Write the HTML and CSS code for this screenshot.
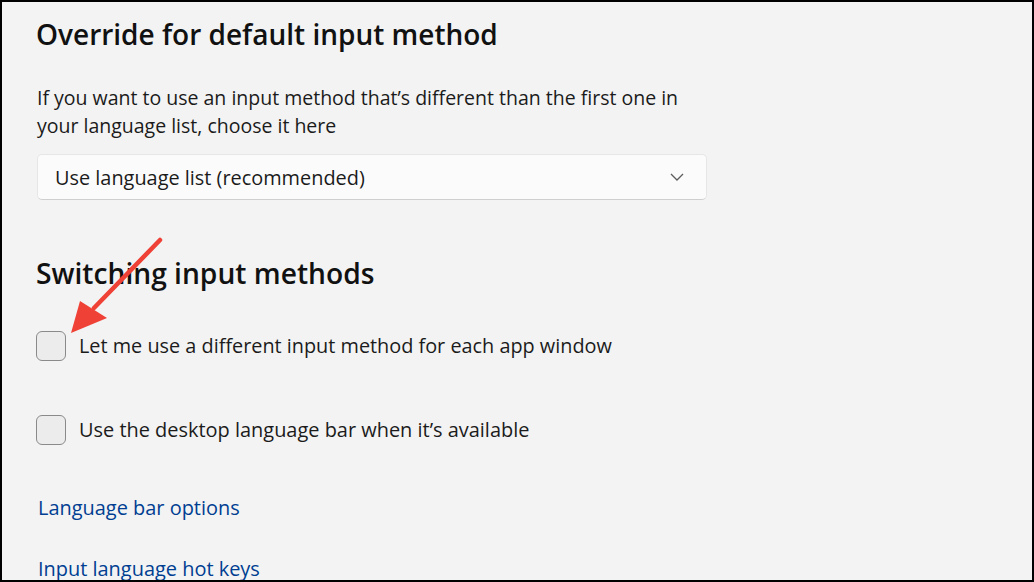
FILE: index.html
```html
<!DOCTYPE html>
<html lang="en">
<head>
<meta charset="utf-8">
<title>Input method settings</title>
<link rel="stylesheet" href="styles.css">
</head>
<body>
<div class="frame">
  <main class="content">
    <h2 class="title">Override for default input method</h2>
    <p class="desc">If you want to use an input method that’s different than the first one in your language list, choose it here</p>
    <div class="select">
      <span class="select-text">Use language list (recommended)</span>
      <svg class="chev" width="14" height="8" viewBox="0 0 14 8"><path d="M1 1 L7 7 L13 1" fill="none" stroke="#5c5c5c" stroke-width="1.3"/></svg>
    </div>
    <h2 class="title title-2">Switching input methods</h2>
    <label class="check-row"><span class="box"></span><span class="check-text">Let me use a different input method for each app window</span></label>
    <label class="check-row"><span class="box"></span><span class="check-text">Use the desktop language bar when it’s available</span></label>
    <a class="link" href="#">Language bar options</a>
    <a class="link" href="#">Input language hot keys</a>
  </main>
  <svg class="arrow" width="200" height="120" viewBox="0 0 200 120">
    <line x1="158" y1="4" x2="92" y2="72" stroke="#ef4136" stroke-width="4.5" stroke-linecap="round"/>
    <polygon points="69,97 78,65 105,82" fill="#ef4136"/>
  </svg>
</div>
</body>
</html>
```
FILE: styles.css
```css
* { box-sizing: border-box; }
html, body { margin: 0; padding: 0; }
body {
  width: 1034px;
  height: 582px;
  overflow: hidden;
  background: #000;
  font-family: "Open Sans", "Noto Sans", sans-serif;
  color: #1b1b1b;
}
.frame {
  position: relative;
  width: 1034px;
  height: 582px;
  border: 2px solid #000;
  background: #f3f3f3;
  overflow: hidden;
}
.content {
  display: flex;
  flex-direction: column;
  align-items: flex-start;
  padding: 14px 0 0 34px;
}
.title {
  margin: 0;
  font-size: 28px;
  font-weight: 600;
  line-height: 36px;
  color: #111;
}
.title-2 { margin-top: 55px; font-size: 28.2px; }
.desc {
  margin: 32px 0 0 1px;
  width: 680px;
  font-size: 19.5px;
  line-height: 28px;
}
.select {
  margin: 14px 0 0 1px;
  width: 670px;
  height: 46px;
  display: flex;
  align-items: center;
  justify-content: space-between;
  padding: 0 22px 0 17px;
  background: #fbfbfb;
  border: 1px solid #e6e6e6;
  border-bottom-color: #cfcfcf;
  border-radius: 5px;
  font-size: 19.9px;
}
.check-row {
  display: flex;
  align-items: center;
  gap: 13px;
  margin-top: 40px;
  font-size: 19.85px;
  line-height: 30px;
}
.check-row + .check-row { margin-top: 54px; }
.check-row + .check-row .check-text { font-size: 19.95px; }
.box {
  width: 30px;
  height: 30px;
  border: 1.5px solid #8a8a8a;
  border-radius: 6px;
  background: #ececec;
}
.link {
  margin: 49px 0 0 2px;
  font-size: 19.95px;
  line-height: 28px;
  color: #003e92;
  text-decoration: none;
}
.link + .link { margin-top: 33px; }
.arrow {
  position: absolute;
  left: 0;
  top: 234px;
}
```
